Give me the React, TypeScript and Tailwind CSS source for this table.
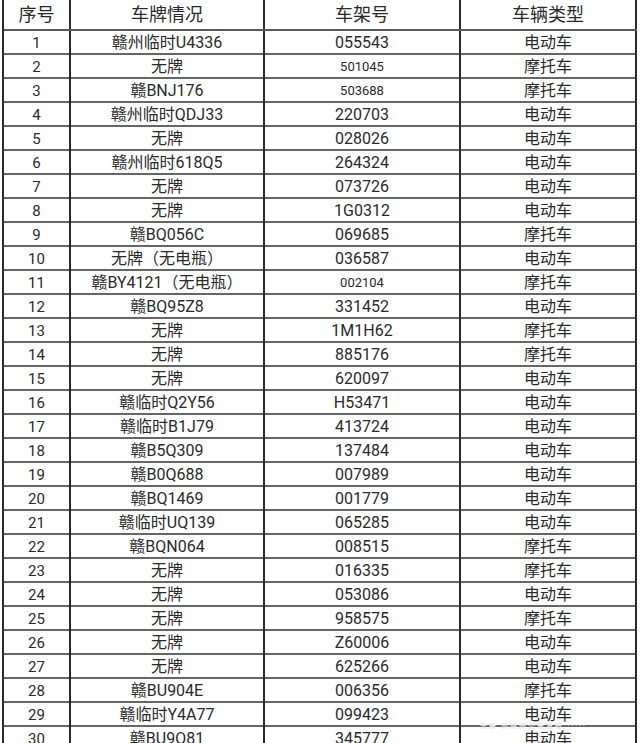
type Row = {
  no: number;
  plate: string;
  frame: string;
  type: string;
  smallFrame?: boolean;
};

const rows: Row[] = [
  { no: 1, plate: "赣州临时U4336", frame: "055543", type: "电动车" },
  { no: 2, plate: "无牌", frame: "501045", type: "摩托车", smallFrame: true },
  { no: 3, plate: "赣BNJ176", frame: "503688", type: "摩托车", smallFrame: true },
  { no: 4, plate: "赣州临时QDJ33", frame: "220703", type: "电动车" },
  { no: 5, plate: "无牌", frame: "028026", type: "电动车" },
  { no: 6, plate: "赣州临时618Q5", frame: "264324", type: "电动车" },
  { no: 7, plate: "无牌", frame: "073726", type: "电动车" },
  { no: 8, plate: "无牌", frame: "1G0312", type: "电动车" },
  { no: 9, plate: "赣BQ056C", frame: "069685", type: "摩托车" },
  { no: 10, plate: "无牌（无电瓶）", frame: "036587", type: "电动车" },
  { no: 11, plate: "赣BY4121（无电瓶）", frame: "002104", type: "摩托车", smallFrame: true },
  { no: 12, plate: "赣BQ95Z8", frame: "331452", type: "电动车" },
  { no: 13, plate: "无牌", frame: "1M1H62", type: "摩托车" },
  { no: 14, plate: "无牌", frame: "885176", type: "摩托车" },
  { no: 15, plate: "无牌", frame: "620097", type: "电动车" },
  { no: 16, plate: "赣临时Q2Y56", frame: "H53471", type: "电动车" },
  { no: 17, plate: "赣临时B1J79", frame: "413724", type: "电动车" },
  { no: 18, plate: "赣B5Q309", frame: "137484", type: "电动车" },
  { no: 19, plate: "赣B0Q688", frame: "007989", type: "电动车" },
  { no: 20, plate: "赣BQ1469", frame: "001779", type: "电动车" },
  { no: 21, plate: "赣临时UQ139", frame: "065285", type: "电动车" },
  { no: 22, plate: "赣BQN064", frame: "008515", type: "摩托车" },
  { no: 23, plate: "无牌", frame: "016335", type: "摩托车" },
  { no: 24, plate: "无牌", frame: "053086", type: "电动车" },
  { no: 25, plate: "无牌", frame: "958575", type: "摩托车" },
  { no: 26, plate: "无牌", frame: "Z60006", type: "电动车" },
  { no: 27, plate: "无牌", frame: "625266", type: "电动车" },
  { no: 28, plate: "赣BU904E", frame: "006356", type: "摩托车" },
  { no: 29, plate: "赣临时Y4A77", frame: "099423", type: "电动车" },
  { no: 30, plate: "赣BU9Q81", frame: "345777", type: "电动车" },
];

const cols = "grid grid-cols-[67px_194px_196px_176px]";
const cell = "flex items-center justify-center border-r-2 border-[#2b2b2b] whitespace-nowrap";

export default function App() {
  return (
    <div className="relative h-[743px] w-[640px] overflow-hidden bg-white font-['Roboto','Noto_Sans_CJK_SC',sans-serif] text-[#2a2a2a]">
      <div className="ml-[2px] w-[635px] border-l-2 border-[#2b2b2b]">
        {/* header */}
        <div className={`${cols} h-[31px] border-b-2 border-[#5a5a5a] text-[18px]`}>
          <div className={cell}>序号</div>
          <div className={cell}>车牌情况</div>
          <div className={cell}>车架号</div>
          <div className={cell}>车辆类型</div>
        </div>

        {rows.map((r) => (
          <div key={r.no} className={`${cols} h-[24px] border-b-2 border-[#666]`}>
            <div className={`${cell} text-[15px]`}>{r.no}</div>
            <div className={`${cell} text-[16px]`}>{r.plate}</div>
            <div className={`${cell} ${r.smallFrame ? "text-[13px]" : "text-[16px]"}`}>{r.frame}</div>
            <div className={`${cell} text-[16px]`}>{r.type}</div>
          </div>
        ))}
      </div>

      {/* watermark */}
      <div className="absolute left-[480px] top-[723px] h-[6px] overflow-hidden text-[7px] leading-[6px] tracking-[2px] text-white [text-shadow:0_0_1px_#aaa]">
        头条 @赣州交警发布 ·····
      </div>
    </div>
  );
}
